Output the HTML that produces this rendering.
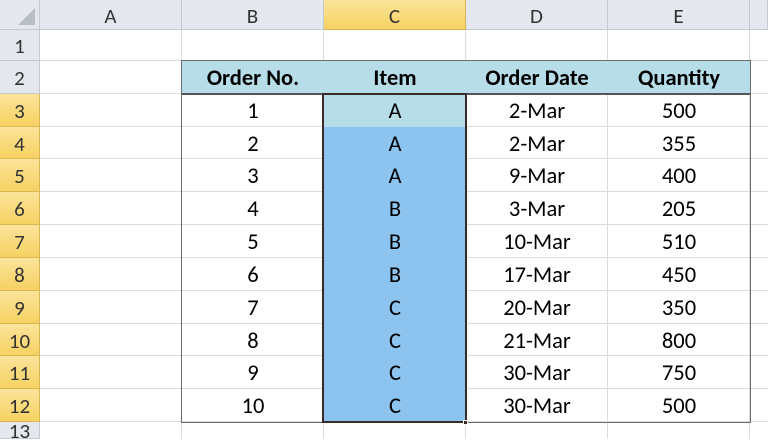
<!DOCTYPE html>
<html><head><meta charset="utf-8"><style>
body{margin:0;width:768px;height:439px;overflow:hidden;background:#fff;font-family:Calibri,Carlito,"Liberation Sans",sans-serif;position:relative}
div{position:absolute;box-sizing:border-box}
.t{display:flex;align-items:center;justify-content:center;color:#000;font-size:22.5px;padding-top:2px}
.h{background:#e4e8ee;color:#333;font-size:21px;border-right:1px solid #c5cad2;border-bottom:1px solid #c5cad2}
.sel{background:linear-gradient(#fbe49b,#f6d262);color:#333;border-right:1px solid #d9b654;border-bottom:1px solid #d9b654}
</style></head><body>
<div id="g"></div>
<script>
var cols=[0,40,182,324,466,608,750,768];
var rows=[0,30,61];for(var i=0;i<11;i++)rows.push(Math.round(61+(i+1)*32.82));rows.push(439);
var o='';
for(var c=2;c<7;c++)o+='<div style="left:'+(cols[c]-1)+'px;top:30px;width:1px;height:409px;background:#dadcdd"></div>';
for(var r=2;r<rows.length-1;r++)o+='<div style="left:40px;top:'+(rows[r]-1)+'px;width:728px;height:1px;background:#dadcdd"></div>';
o+='<div class="h" style="left:0;top:0;width:40px;height:30px"><div style="left:18px;top:8px;width:0;height:0;border-left:17px solid transparent;border-bottom:17px solid #b8bec6"></div></div>';
var L=['A','B','C','D','E',''];
for(var c=1;c<7;c++)o+='<div class="t h'+(c==3?' sel':'')+'" style="left:'+cols[c]+'px;top:0;width:'+(cols[c+1]-cols[c])+'px;height:30px">'+L[c-1]+'</div>';
for(var r=1;r<14;r++)o+='<div class="t h'+(r>=3&&r<=12?' sel':'')+'" style="left:0;top:'+rows[r]+'px;width:40px;height:'+(rows[r+1]-rows[r])+'px">'+r+'</div>';
o+='<div style="left:182px;top:61px;width:568px;height:'+(rows[3]-61)+'px;background:#b7dde8"></div>';
o+='<div style="left:324px;top:'+rows[3]+'px;width:142px;height:'+(rows[13]-rows[3])+'px;background:#8cc4ef"></div>';
o+='<div style="left:324px;top:'+rows[3]+'px;width:142px;height:'+(rows[4]-rows[3])+'px;background:#b7dde8"></div>';
var H=['Order No.','Item','Order Date','Quantity'];
for(var c=0;c<4;c++)o+='<div class="t" style="left:'+cols[c+2]+'px;top:61px;width:142px;height:'+(rows[3]-61)+'px;font-weight:bold">'+H[c]+'</div>';
var D=[['A','2-Mar',500],['A','2-Mar',355],['A','9-Mar',400],['B','3-Mar',205],['B','10-Mar',510],['B','17-Mar',450],['C','20-Mar',350],['C','21-Mar',800],['C','30-Mar',750],['C','30-Mar',500]];
for(var i=0;i<10;i++){var v=[i+1,D[i][0],D[i][1],D[i][2]];for(var c=0;c<4;c++)o+='<div class="t" style="left:'+cols[c+2]+'px;top:'+rows[i+3]+'px;width:142px;height:'+(rows[i+4]-rows[i+3])+'px">'+v[c]+'</div>';}
o+='<div style="left:181px;top:60px;width:570px;height:'+(rows[13]-59)+'px;border:1px solid #6b6b6b"></div>';
o+='<div style="left:182px;top:'+(rows[3]-1)+'px;width:568px;height:2px;background:#555"></div>';
o+='<div style="left:322px;top:'+(rows[3]-1)+'px;width:145px;height:'+(rows[13]-rows[3]+2)+'px;border:2px solid #3b2b28"></div>';
o+='<div style="left:463px;top:'+(rows[13]-2)+'px;width:5px;height:5px;background:#3b2b28;border:1px solid #fff"></div>';
document.getElementById('g').innerHTML=o;
</script>
</body></html>
